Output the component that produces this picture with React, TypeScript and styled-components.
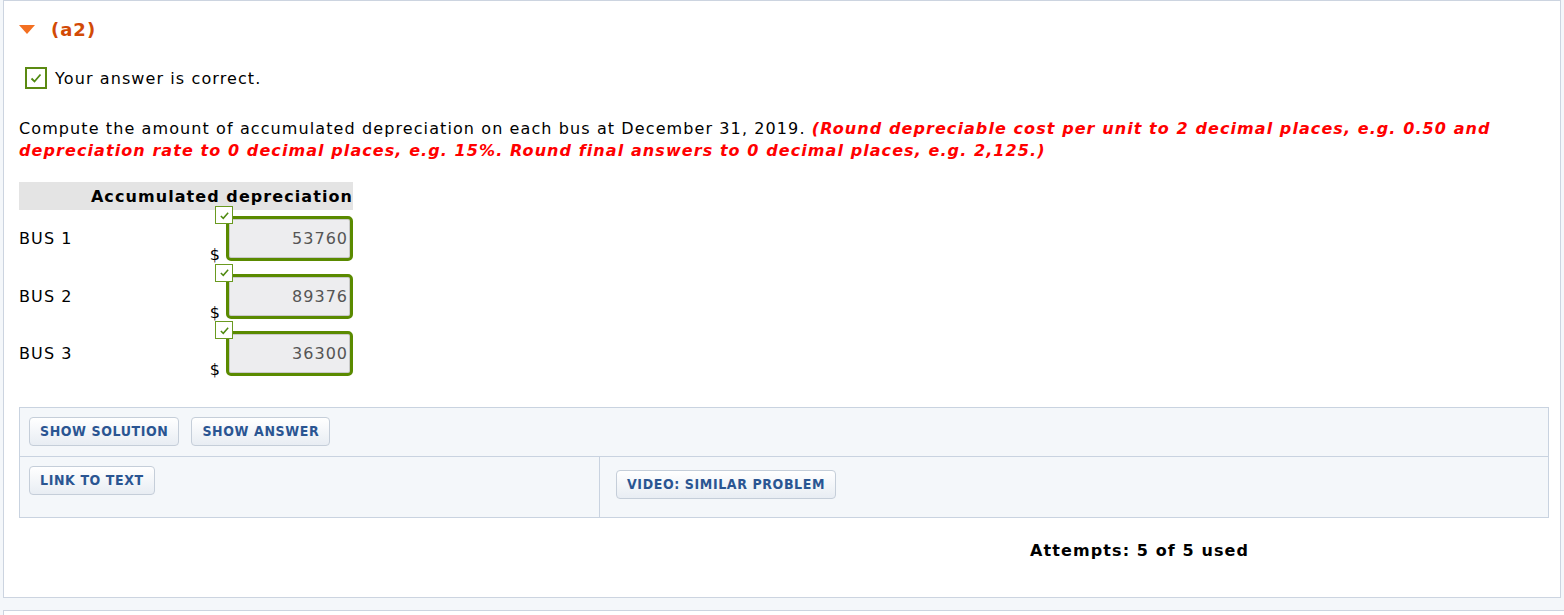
import styled, { createGlobalStyle } from "styled-components";

const GlobalStyle = createGlobalStyle`
  html, body {
    margin: 0;
    padding: 0;
    background: #f4f7fa;
    font-family: "DejaVu Sans", Verdana, sans-serif;
    color: #000;
  }
`;

const rows = [
  { label: "BUS 1", value: "53760" },
  { label: "BUS 2", value: "89376" },
  { label: "BUS 3", value: "36300" },
];

const Check = ({ size }: { size: number }) => (
  <svg width={size} height={size} viewBox="0 0 16 16">
    <polyline
      points="3.5,8.5 6.5,11.5 12.5,4.5"
      fill="none"
      stroke="#4f8a10"
      strokeWidth="1.8"
    />
  </svg>
);

const App = () => {
  return (
    <>
      <GlobalStyle />
      <Panel>
        <PartHeader>
          <Triangle />
          <PartTitle>(a2)</PartTitle>
        </PartHeader>

        <Correct>
          <CheckBox $size={22}>
            <Check size={16} />
          </CheckBox>
          Your answer is correct.
        </Correct>

        <Question>
          Compute the amount of accumulated depreciation on each bus at December 31, 2019.{" "}
          <Hint>
            (Round depreciable cost per unit to 2 decimal places, e.g. 0.50 and depreciation rate to 0
            decimal places, e.g. 15%. Round final answers to 0 decimal places, e.g. 2,125.)
          </Hint>
        </Question>

        <AnswerTable>
          <thead>
            <tr>
              <HeadCell />
              <HeadCell>Accumulated depreciation</HeadCell>
            </tr>
          </thead>
          <tbody>
            {rows.map((r) => (
              <tr key={r.label}>
                <LabelCell>{r.label}</LabelCell>
                <ValueCell>
                  <ValueWrap>
                    <Dollar>$</Dollar>
                    <InputBox>
                      <SmallCheck>
                        <Check size={13} />
                      </SmallCheck>
                      {r.value}
                    </InputBox>
                  </ValueWrap>
                </ValueCell>
              </tr>
            ))}
          </tbody>
        </AnswerTable>

        <ButtonPanel>
          <ButtonRow>
            <ActionButton>SHOW SOLUTION</ActionButton>
            <ActionButton>SHOW ANSWER</ActionButton>
          </ButtonRow>
          <SplitRow>
            <Cell>
              <ActionButton>LINK TO TEXT</ActionButton>
            </Cell>
            <Cell $divider $offset>
              <ActionButton>VIDEO: SIMILAR PROBLEM</ActionButton>
            </Cell>
          </SplitRow>
        </ButtonPanel>

        <Attempts>Attempts: 5 of 5 used</Attempts>
      </Panel>
      <NextPanel />
    </>
  );
};

const Panel = styled.div`
  margin-left: 3px;
  width: 1558px;
  height: 598px;
  box-sizing: border-box;
  background: #fff;
  border: 1px solid #ccd4e0;
  padding: 14px 15px 0 15px;
  letter-spacing: 1.1px;
`;

const NextPanel = styled.div`
  margin: 12px 0 0 3px;
  height: 40px;
  background: #fff;
  border: 1px solid #ccd4e0;
  border-right: none;
`;

const PartHeader = styled.div`
  display: flex;
  align-items: center;
  gap: 16px;
  height: 28px;
`;

const Triangle = styled.span`
  width: 0;
  height: 0;
  border-left: 8px solid transparent;
  border-right: 8px solid transparent;
  border-top: 9px solid #f36f21;
`;

const PartTitle = styled.span`
  font-size: 18px;
  font-weight: bold;
  color: #d24a06;
  letter-spacing: 1px;
`;

const Correct = styled.div`
  display: flex;
  align-items: center;
  gap: 8px;
  margin: 24px 0 0 6px;
  font-size: 16px;
`;

const CheckBox = styled.span<{ $size: number }>`
  display: inline-flex;
  align-items: center;
  justify-content: center;
  width: ${(p) => p.$size}px;
  height: ${(p) => p.$size}px;
  box-sizing: border-box;
  border: 2px solid #5b8a12;
  background: #fff;
`;

const Question = styled.p`
  margin: 29px 0 0;
  font-size: 16px;
  line-height: 22px;
`;

const Hint = styled.span`
  color: #f00;
  font-weight: bold;
  font-style: italic;
  letter-spacing: 1.08px;
`;

const AnswerTable = styled.table`
  margin-top: 20px;
  border-collapse: collapse;
  width: 334px;
  font-size: 16px;
`;

const HeadCell = styled.th`
  background: #e4e4e4;
  height: 28px;
  padding: 0;
  text-align: right;
  font-weight: bold;
  white-space: nowrap;
  letter-spacing: 1.07px;
`;

const LabelCell = styled.td`
  padding: 0;
  height: 57.5px;
  vertical-align: middle;
  width: 190px;
`;

const ValueCell = styled.td`
  padding: 0;
  vertical-align: middle;
`;

const ValueWrap = styled.div`
  display: flex;
  align-items: flex-end;
  justify-content: flex-end;
  gap: 5px;
`;

const Dollar = styled.span`
  font-size: 16px;
  line-height: 16px;
  margin-bottom: -2px;
`;

const InputBox = styled.div`
  position: relative;
  width: 127px;
  height: 45px;
  box-sizing: border-box;
  border: 3px solid #5a8a00;
  border-radius: 5px;
  box-shadow: inset 0 0 0 1px #c9c9c9;
  background: #ededef;
  color: #555;
  font-size: 16px;
  letter-spacing: 1px;
  display: flex;
  align-items: center;
  justify-content: flex-end;
  padding-right: 2px;
`;

const SmallCheck = styled.span`
  position: absolute;
  left: -14px;
  top: -13px;
  width: 18px;
  height: 18px;
  box-sizing: border-box;
  border: 1.5px solid #6a9a20;
  background: #fff;
  display: flex;
  align-items: center;
  justify-content: center;
`;

const ButtonPanel = styled.div`
  margin-top: 24px;
  width: 1530px;
  box-sizing: border-box;
  border: 1px solid #c9d3e0;
  background: #f4f7fa;
`;

const ButtonRow = styled.div`
  display: flex;
  gap: 12px;
  padding: 9px 9px 0;
  height: 49px;
  box-sizing: border-box;
  border-bottom: 1px solid #c9d3e0;
`;

const SplitRow = styled.div`
  display: grid;
  grid-template-columns: 579px 1fr;
  height: 60px;
`;

const Cell = styled.div<{ $divider?: boolean; $offset?: boolean }>`
  padding: ${(p) => (p.$offset ? "13px 16px 0" : "9px 9px 0")};
  border-left: ${(p) => (p.$divider ? "1px solid #c9d3e0" : "none")};
`;

const ActionButton = styled.button`
  height: 29px;
  padding: 0 10px;
  border: 1px solid #c5ced9;
  border-radius: 4px;
  background: linear-gradient(#ffffff, #e8edf3);
  color: #2a5592;
  font-family: "DejaVu Sans Condensed", "Liberation Sans", sans-serif;
  font-weight: bold;
  font-size: 14px;
  letter-spacing: 0.6px;
  cursor: pointer;
`;

const Attempts = styled.div`
  margin: 23px 0 0 1011px;
  font-size: 16px;
  font-weight: bold;
`;

export default App;
